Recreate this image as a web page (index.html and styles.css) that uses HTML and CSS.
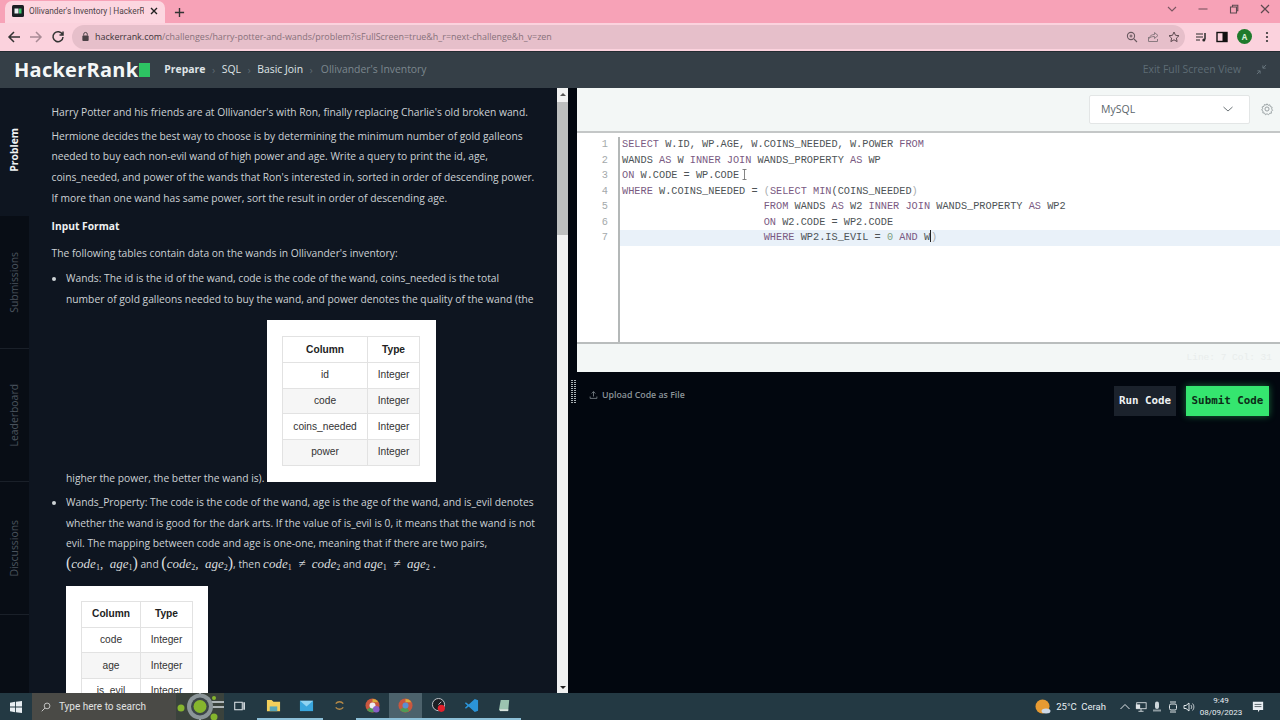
FILE: index.html
```html
<!DOCTYPE html>
<html lang="en">
<head>
<meta charset="utf-8">
<title>Ollivander's Inventory</title>
<link rel="stylesheet" href="styles.css">
</head>
<body>
<div class="tabstrip">
  <div class="tab">
    <svg class="favicon" viewBox="0 0 12 12"><rect width="12" height="12" rx="1.5" fill="#1b1f24"/><rect x="2.5" y="3.5" width="4" height="5" fill="#e9eef0"/><rect x="7" y="3.5" width="2.5" height="5" fill="#39c46a"/></svg>
    <span class="tab-title">Ollivander's Inventory | HackerRa</span>
    <svg class="tab-x" viewBox="0 0 10 10"><path d="M2 2l6 6M8 2l-6 6" stroke="#222" stroke-width="1.4"/></svg>
  </div>
  <svg class="tab-plus" viewBox="0 0 12 12"><path d="M6 1v10M1 6h10" stroke="#333" stroke-width="1.5"/></svg>
  <div class="win-controls">
    <svg viewBox="0 0 12 12"><path d="M2 4l4 4 4-4" fill="none" stroke="#7a5561" stroke-width="1.1"/></svg>
    <svg viewBox="0 0 12 12"><path d="M1.5 6h9" stroke="#7a5561" stroke-width="1.1"/></svg>
    <svg viewBox="0 0 12 12"><path d="M2.5 4h6v6h-6zM4.5 4V2.2h5.3v5.5H8.500" fill="none" stroke="#5d4a50" stroke-width="1.1"/></svg>
    <svg viewBox="0 0 12 12"><path d="M2 2l8 8M10 2l-8 8" stroke="#5d4a50" stroke-width="1.2"/></svg>
  </div>
</div>
<div class="toolbar">
  <svg class="nav" viewBox="0 0 14 14"><path d="M13 7H2M7 2L2 7l5 5" fill="none" stroke="#333" stroke-width="1.5"/></svg>
  <svg class="nav" viewBox="0 0 14 14"><path d="M1 7h11M7 2l5 5-5 5" fill="none" stroke="#a98b95" stroke-width="1.5"/></svg>
  <svg class="nav" viewBox="0 0 14 14"><path d="M11.500 4.500A5 5 0 1 0 12 7M12 1.500v3.500H8.500" fill="none" stroke="#333" stroke-width="1.5"/></svg>
  <div class="address">
    <svg class="lock" viewBox="0 0 10 12"><rect x="1.500" y="5" width="7" height="6" rx="1" fill="#4b4146"/><path d="M3 5V3.500a2 2 0 0 1 4 0V5" fill="none" stroke="#4b4146" stroke-width="1.1"/></svg>
    <span class="url"><b>hackerrank.com</b>/challenges/harry-potter-and-wands/problem?isFullScreen=true&amp;h_r=next-challenge&amp;h_v=zen</span>
    <div class="addr-icons">
      <svg viewBox="0 0 12 12"><circle cx="5" cy="5" r="3.600" fill="none" stroke="#6a5a60" stroke-width="1.100"/><path d="M8 8l3 3M3.500 5h3M5 3.500v3" stroke="#6a5a60" stroke-width="1.100"/></svg>
      <svg viewBox="0 0 12 12"><path d="M1.500 6v4.500h9V8M1.800 7.500C3 4.500 5 3.500 7.500 3.500V1.500L11 4.500 7.500 7.500V5.500C5 5.500 3.300 6 1.800 7.500z" fill="none" stroke="#8a7a80" stroke-width="1"/></svg>
      <svg viewBox="0 0 12 12"><path d="M6 1l1.500 3.300 3.500.4-2.600 2.400.7 3.500L6 8.800 2.900 10.600l.7-3.500L1 4.700l3.500-.4z" fill="none" stroke="#5d4a50" stroke-width="1"/></svg>
    </div>
  </div>
  <div class="ext-icons">
    <svg viewBox="0 0 12 12"><path d="M1 3h7M1 6h7M1 9h4" stroke="#2a2a2a" stroke-width="1.200"/><path d="M10 2v6.500" stroke="#2a2a2a" stroke-width="1.500"/><circle cx="8.800" cy="9" r="1.500" fill="#2a2a2a"/></svg>
    <svg viewBox="0 0 12 12"><rect x="1" y="1.500" width="10" height="9" fill="none" stroke="#111" stroke-width="1.400"/><rect x="6.500" y="1.500" width="4.500" height="9" fill="#111"/></svg>
    <span class="avatar">A</span>
    <svg viewBox="0 0 12 12"><circle cx="6" cy="2" r="1.100" fill="#333"/><circle cx="6" cy="6" r="1.100" fill="#333"/><circle cx="6" cy="10" r="1.100" fill="#333"/></svg>
  </div>
</div>
<header class="site-header">
  <div class="logo">HackerRank<span class="logo-block"></span></div>
  <nav class="crumbs">
    <span class="crumb-strong">Prepare</span><span class="sep">›</span>
    <span>SQL</span><span class="sep">›</span>
    <span>Basic Join</span><span class="sep">›</span>
    <span class="crumb-dim">Ollivander's Inventory</span>
  </nav>
  <div class="exit">Exit Full Screen View
    <svg viewBox="0 0 12 12"><path d="M11 1L7.500 4.500M7.500 1.500v3h3M1 11l3.500-3.500M1.500 7.500h3v3" fill="none" stroke="#6a7780" stroke-width="1"/></svg>
  </div>
</header>
<main class="workspace">
  <aside class="rail">
    <div class="rail-item active"><span>Problem</span></div>
    <div class="rail-item"><span>Submissions</span></div>
    <div class="rail-item"><span>Leaderboard</span></div>
    <div class="rail-item"><span>Discussions</span></div>
  </aside>
  <section class="problem">
    <p>Harry Potter and his friends are at Ollivander's with Ron, finally replacing Charlie's old broken wand.</p>
    <p>Hermione decides the best way to choose is by determining the minimum number of gold galleons needed to buy each non-evil wand of high power and age. Write a query to print the id, age, coins_needed, and power of the wands that Ron's interested in, sorted in order of descending power. If more than one wand has same power, sort the result in order of descending age.</p>
    <h4>Input Format</h4>
    <p class="lead">The following tables contain data on the wands in Ollivander's inventory:</p>
    <ul>
      <li>Wands: The id is the id of the wand, code is the code of the wand, coins_needed is the total number of gold galleons needed to buy the wand, and power denotes the quality of the wand (the
        higher the power, the better the wand is).
        <span class="figure fig-a">
          <table>
            <tr><th>Column</th><th>Type</th></tr>
            <tr><td>id</td><td>Integer</td></tr>
            <tr><td>code</td><td>Integer</td></tr>
            <tr><td>coins_needed</td><td>Integer</td></tr>
            <tr><td>power</td><td>Integer</td></tr>
          </table>
        </span></li>
      <li>Wands_Property: The code is the code of the wand, age is the age of the wand, and is_evil denotes whether the wand is good for the dark arts. If the value of is_evil is 0, it means that the wand is not evil. The mapping between code and age is one-one, meaning that if there are two pairs,<br>
        <span class="math"><span class="paren">(</span>code<sub>1</sub>, &nbsp;age<sub>1</sub><span class="paren">)</span></span> and <span class="math"><span class="paren">(</span>code<sub>2</sub>, &nbsp;age<sub>2</sub><span class="paren">)</span></span>, then <span class="math">code<sub>1</sub> &nbsp;≠ &nbsp;code<sub>2</sub></span> and <span class="math">age<sub>1</sub> &nbsp;≠ &nbsp;age<sub>2</sub> .</span>
        <span class="figure fig-b">
          <table>
            <tr><th>Column</th><th>Type</th></tr>
            <tr><td>code</td><td>Integer</td></tr>
            <tr><td>age</td><td>Integer</td></tr>
            <tr><td>is_evil</td><td>Integer</td></tr>
          </table>
        </span>
      </li>
    </ul>
  </section>
  <div class="scrollbar">
    <span class="arrow up"></span>
    <span class="thumb"></span>
    <span class="arrow down"></span>
  </div>
  <div class="gutter"><span class="grip"></span></div>
  <section class="right">
    <div class="editor">
      <div class="editor-top">
        <div class="lang">MySQL
          <svg viewBox="0 0 12 12"><path d="M1.500 4l4.500 4 4.500-4" fill="none" stroke="#6c7478" stroke-width="1"/></svg>
        </div>
        <svg class="gear" viewBox="0 0 24 24"><circle cx="12" cy="12" r="3.500" fill="none" stroke="#8b9497" stroke-width="1.500"/><path d="M12 2l2 3 3.500-1 .8 3.500 3.500 1-1 3.500 2 2.500-2.800 2 .5 3.500-3.500.2L15 23l-3-2-3 2-1.500-3.300-3.500-.2.500-3.500-2.800-2 2-2.500-1-3.500 3.500-1 .8-3.500 3.500 1z" transform="translate(1.200 1.200) scale(.9)" fill="none" stroke="#8b9497" stroke-width="1.500"/></svg>
      </div>
      <div class="code">
        <div class="line"><span class="num">1</span><span class="src"><i>SELECT</i> W.ID, WP.AGE, W.COINS_NEEDED, W.POWER <i>FROM</i></span></div>
        <div class="line"><span class="num">2</span><span class="src">WANDS <i>AS</i> W <i>INNER JOIN</i> WANDS_PROPERTY <i>AS</i> WP</span></div>
        <div class="line"><span class="num">3</span><span class="src"><i>ON</i> W.CODE = WP.CODE<svg class="ibeam" viewBox="0 0 5 11"><path d="M.5.500h4M2.500.500v10M.5 10.500h4" fill="none" stroke="#666" stroke-width=".8"/></svg></span></div>
        <div class="line"><span class="num">4</span><span class="src"><i>WHERE</i> W.COINS_NEEDED = <span class="dimparen">(</span><i>SELECT</i> <i>MIN</i>(COINS_NEEDED<span class="dimparen">)</span></span></div>
        <div class="line"><span class="num">5</span><span class="src">                       <i>FROM</i> WANDS <i>AS</i> W2 <i>INNER JOIN</i> WANDS_PROPERTY <i>AS</i> WP2</span></div>
        <div class="line"><span class="num">6</span><span class="src">                       <i>ON</i> W2.CODE = WP2.CODE</span></div>
        <div class="line current"><span class="num">7</span><span class="src">                       <i>WHERE</i> WP2.IS_EVIL = <u>0</u> <i>AND</i> W<s></s><span class="dimparen">)</span></span></div>
        <div class="code-fill"><span class="num"></span><span class="src"></span></div>
      </div>
      <div class="status">Line: 7 Col: 31</div>
    </div>
    <div class="actions">
      <div class="upload">
        <svg viewBox="0 0 12 12"><path d="M6 8V1.500M3.500 4L6 1.500 8.500 4M1.500 8v2.500h9V8" fill="none" stroke="#8b9499" stroke-width="1"/></svg>
        Upload Code as File
      </div>
      <div class="btn run">Run Code</div>
      <div class="btn submit">Submit Code</div>
    </div>
  </section>
</main>
<footer class="taskbar">
  <svg class="start" viewBox="0 0 14 14"><path d="M0 2l6-1v5.500H0zM7 1l7-1v6.500H7zM0 7.500h6V13l-6-1zM7 7.500h7V14l-7-1z" fill="#e8eef2"/></svg>
  <div class="search">
    <svg viewBox="0 0 14 14"><circle cx="8.500" cy="5.500" r="4" fill="none" stroke="#e0e0e0" stroke-width="1.100"/><path d="M5.500 8.500L1 13" stroke="#e0e0e0" stroke-width="1.200"/></svg>
    <span>Type here to search</span>
    <svg class="search-art" viewBox="0 0 48 27"><path d="M0 0h48v27H0z" fill="#3a423c"/><path d="M24 0v27M32 9h16M32 14h16" stroke="#aeb5b7" stroke-width="2"/><circle cx="24" cy="13.500" r="13" fill="#8b9598"/><circle cx="24" cy="13.500" r="9" fill="#3c4548"/><circle cx="24" cy="13.500" r="6.500" fill="#86b52d"/><circle cx="5" cy="15" r="3.500" fill="#86b52d"/><circle cx="38" cy="24" r="3.500" fill="#86b52d"/><circle cx="38" cy="5" r="2" fill="#86b52d"/></svg>
  </div>
  <div class="task-apps">
    <div class="app plain"><svg viewBox="0 0 16 16"><rect x="1" y="3" width="10" height="10" fill="none" stroke="#e8eef2" stroke-width="1.300"/><path d="M13.500 3v10" stroke="#e8eef2" stroke-width="2"/></svg></div>
    <div class="app on"><svg viewBox="0 0 16 16"><path d="M1 2h5l2 2h7v10H1z" fill="#f3cf5b"/><rect x="4" y="9" width="8" height="5" fill="#5aa7b8"/></svg></div>
    <div class="app on"><svg viewBox="0 0 16 16"><rect x="1" y="3" width="14" height="11" fill="#3aa6dd"/><path d="M1 3l7 6 7-6" fill="#8fd3f2"/></svg></div>
    <div class="app"><svg viewBox="0 0 16 16"><path d="M4 6a5 5 0 0 1 8 0M4 10a5 5 0 0 0 8 0" fill="none" stroke="#b78a47" stroke-width="1.500"/></svg></div>
    <div class="app on"><svg viewBox="0 0 16 16"><circle cx="8" cy="8" r="7.500" fill="#c9573f"/><path d="M8 1a7 7 0 0 1 6 3.500H8z" fill="#d9b13b"/><path d="M2 12.500a7 7 0 0 0 10 1L8 8z" fill="#4f9a55"/><circle cx="8" cy="8" r="3.200" fill="#f0eef2"/><circle cx="12" cy="12" r="3.500" fill="#8a5fc7"/></svg></div>
    <div class="app on active"><svg viewBox="0 0 16 16"><circle cx="8" cy="8" r="7.500" fill="#c9573f"/><path d="M8 1a7 7 0 0 1 6 3.500H8z" fill="#d9b13b"/><path d="M2 12.500a7 7 0 0 0 10 1L8 8z" fill="#4f9a55"/><circle cx="8" cy="8" r="3.200" fill="#5b8fd0"/></svg></div>
    <div class="app on"><svg viewBox="0 0 16 16"><circle cx="8" cy="7" r="6.500" fill="#1b1f24" stroke="#c8ccd0"/><path d="M8 7l3-3" stroke="#c8ccd0"/><circle cx="11" cy="11" r="3.800" fill="#e3202b"/></svg></div>
    <div class="app on"><svg viewBox="0 0 16 16"><path d="M11.500 1L15 2.500v11L11.500 15 5 9l-3 2.500L1 10.500 3.500 8 1 5.500 2 4.500 5 7z" fill="#2b94d8"/></svg></div>
    <div class="app on"><svg viewBox="0 0 16 16"><path d="M4 2h9l-1 11H2z" fill="#9cc4b0"/><path d="M3 12h9v2H3z" fill="#d7e2dc"/></svg></div>
  </div>
  <div class="tray">
    <svg class="sun" viewBox="0 0 16 16"><circle cx="7.500" cy="7.500" r="7" fill="#e69a32"/><ellipse cx="11" cy="12" rx="4.500" ry="2.500" fill="#cdd8e6"/></svg>
    <span class="weather">25°C &nbsp;Cerah</span>
    <svg class="tray-i" viewBox="0 0 12 12"><path d="M1.500 8L6 3.500 10.500 8" fill="none" stroke="#dfe5e8" stroke-width="1"/></svg>
    <svg class="tray-i" viewBox="0 0 14 12"><rect x="2" y="1" width="11" height="7" fill="none" stroke="#dfe5e8"/><rect x="1" y="3" width="5" height="5" fill="#dfe5e8"/><path d="M4 11h6M7 8v3" stroke="#dfe5e8"/></svg>
    <svg class="tray-i" viewBox="0 0 12 12"><rect x="4" y="0.500" width="4" height="7.500" rx="2" fill="#cdd6da"/><path d="M2 8.500h8v2H2z" fill="#8d9aa0"/></svg>
    <svg class="tray-i" viewBox="0 0 12 12"><rect x="2.500" y="3" width="7" height="6" rx="1.500" fill="none" stroke="#dfe5e8"/><path d="M3 1h6M3 11h6" stroke="#dfe5e8"/></svg>
    <svg class="tray-i" viewBox="0 0 12 12"><path d="M1 4.500h2L6 2v8L3 7.500H1z" fill="none" stroke="#dfe5e8"/><path d="M8 4a3 3 0 0 1 0 4M9.500 2.500a5 5 0 0 1 0 7" fill="none" stroke="#dfe5e8" stroke-width=".8"/></svg>
    <div class="clock"><span>9:49</span><span>08/09/2023</span></div>
    <svg class="notif" viewBox="0 0 14 14"><path d="M1 1h12v9.500H9L7 13v-2.500H1z" fill="#e8eef2"/><path d="M3 4h8M3 6.500h8" stroke="#49555b"/></svg>
  </div>
</footer>
</body>
</html>
```

FILE: styles.css
```css
* { box-sizing: border-box; }
html, body { margin: 0; height: 100%; }
body {
  width: 1280px;
  height: 720px;
  overflow: hidden;
  display: flex;
  flex-direction: column;
  font-family: "Open Sans", "Liberation Sans", sans-serif;
  background: #0e1520;
}
svg { display: block; flex: none; }

/* Browser chrome */
.tabstrip {
  height: 23px;
  flex: none;
  display: flex;
  align-items: flex-end;
  background: #f7a2b7;
  padding-left: 5px;
}
.tab {
  width: 160px;
  height: 22px;
  background: #fcd6e0;
  border-radius: 7px 7px 0 0;
  display: flex;
  align-items: center;
  padding: 0 6px 2px 7px;
  gap: 5px;
}
.favicon { width: 12px; height: 12px; }
.tab-title {
  font-family: Roboto, sans-serif;
  font-size: 8.300px;
  color: #4d4347;
  white-space: nowrap;
  overflow: hidden;
  flex: 1;
  min-width: 0;
}
.tab-x { width: 10px; height: 10px; }
.tab-plus { width: 11px; height: 11px; margin: 0 0 5px 9px; }
.win-controls {
  margin-left: auto;
  align-self: flex-start;
  display: flex;
  gap: 19px;
  padding: 3px 9px 0 0;
}
.win-controls svg { width: 12px; height: 12px; }

.toolbar {
  height: 28px;
  flex: none;
  background: #fbd2dd;
  display: flex;
  align-items: center;
  padding: 0 0 1px 7px;
}
.nav { width: 14px; height: 14px; margin-right: 8px; }
.nav:nth-child(3) { margin-right: 7px; }
.address {
  width: 1113px;
  height: 24px;
  background: #e6bfca;
  border-radius: 12px;
  display: flex;
  align-items: center;
  padding: 0 5px 0 9px;
}
.lock { width: 9px; height: 11px; margin: 0 5px 0 0; }
.url {
  font-size: 8.930px;
  color: #86717a;
  white-space: nowrap;
  font-family: "Open Sans", sans-serif;
}
.url b { font-weight: 400; color: #3c3338; }
.addr-icons { margin-left: auto; display: flex; gap: 9px; }
.addr-icons svg { width: 12px; height: 12px; }
.ext-icons {
  display: flex;
  align-items: center;
  margin-left: 10px;
  gap: 9px;
}
.ext-icons svg { width: 12px; height: 12px; }
.avatar {
  width: 15px;
  height: 15px;
  border-radius: 50%;
  background: #1f7a2c;
  color: #d7eed9;
  font-size: 8px;
  font-weight: 700;
  display: flex;
  align-items: center;
  justify-content: center;
}

/* Site header */
.site-header {
  height: 37px;
  flex: none;
  background: #353f47;
  border-top: 1px solid #232b31;
  display: flex;
  align-items: center;
  padding: 0 13px 2px 14px;
}
.logo {
  font-family: "Open Sans", sans-serif;
  font-weight: 700;
  font-size: 20px;
  color: #f4f7f7;
  display: flex;
  align-items: center;
  letter-spacing: 0.25px;
}
.logo-block {
  width: 11px;
  height: 14px;
  background: #2dc463;
  margin: 2px 0 0 1px;
}
.crumbs {
  margin-left: 14px;
  display: flex;
  align-items: center;
  font-size: 10.400px;
  color: #dfe4e6;
}
.crumb-strong { font-weight: 700; }
.sep { color: #5c6870; margin: 0 6.500px; font-size: 11px; }
.crumb-dim { color: #7c878e; margin-left: 1.500px; }
.exit {
  margin-left: auto;
  display: flex;
  align-items: center;
  gap: 15px;
  font-size: 10.400px;
  color: #5e6c75;
}
.exit svg { width: 11px; height: 11px; }

/* Workspace */
.workspace {
  flex: 1;
  min-height: 0;
  display: flex;
  background: #0e1520;
}
.rail {
  width: 29px;
  flex: none;
  background: #080d15;
  display: flex;
  flex-direction: column;
}
.rail-item {
  height: 133px;
  display: flex;
  align-items: center;
  justify-content: center;
  padding-right: 1px;
  border-bottom: 1px solid #1a2029;
}
.rail-item:first-child { height: 128px; border-bottom: 0; }
.rail-item.active { background: #0e1520; }
.rail-item span {
  writing-mode: vertical-rl;
  transform: rotate(180deg);
  font-size: 10.400px;
  color: #4a535d;
  white-space: nowrap;
}
.rail-item:first-child span { margin-bottom: 4px; }
.rail-item.active span { color: #f0f3f4; font-weight: 700; }

.problem {
  width: 528px;
  flex: none;
  overflow: hidden;
  padding: 14px 20px 0 22.500px;
  font-size: 10.270px;
  line-height: 20.700px;
  color: #cdd2d5;
}
.problem p { margin: 0 0 3px; }
.problem h4 {
  margin: 7px 0 7px;
  font-size: 10.270px;
  font-weight: 700;
  color: #eef1f2;
}
.problem .lead { margin-bottom: 4px; }
.problem ul { margin: 0; padding-left: 14.500px; }
.problem li { margin-bottom: 3px; }
.problem li::marker { color: #cdd2d5; }
.figure {
  display: inline-block;
  background: #fff;
  padding: 15px;
  vertical-align: baseline;
}
.fig-a { width: 169px; height: 162px; margin: 11px 0 0; padding-top: 16px; }
.fig-b { display: block; width: 142px; height: 180px; margin-top: 11px; overflow: hidden; }
.figure table {
  border-collapse: collapse;
  font-family: "Liberation Sans", Arial, sans-serif;
  font-size: 10.200px;
  line-height: 14px;
  color: #333;
}
.figure td, .figure th {
  border: 1px solid #e2e2e2;
  text-align: center;
  height: 25.700px;
  padding: 0;
}
.fig-a td:first-child, .fig-a th:first-child { width: 85px; }
.fig-a td:last-child, .fig-a th:last-child { width: 52px; }
.fig-b td:first-child, .fig-b th:first-child { width: 59px; }
.fig-b td:last-child, .fig-b th:last-child { width: 52px; }
.figure th { font-weight: 700; color: #222; }
.figure tr:nth-child(odd) td { background: #f6f6f6; }
.math {
  font-family: "Liberation Serif", serif;
  font-style: italic;
  font-size: 13px;
  color: #d8dcde;
}
.math sub { font-size: 8px; font-style: normal; vertical-align: -2px; line-height: 0; }
.paren { font-style: normal; font-size: 16px; line-height: 0; }

.scrollbar {
  width: 11px;
  flex: none;
  background: #f0f1f1;
  display: flex;
  flex-direction: column;
  align-items: center;
}
.thumb {
  width: 100%;
  height: 133px;
  background: #bdbfbf;
  margin-top: 3px;
  flex: none;
}
.arrow { width: 0; height: 0; border: 3.500px solid transparent; flex: none; }
.arrow.up { border-bottom-color: #555; margin-top: 2px; margin-bottom: 3px; }
.arrow.down { border-top-color: #222; margin-top: auto; margin-bottom: 1px; }

.gutter {
  width: 9px;
  flex: none;
  background: #02070f;
  position: relative;
}
.grip {
  position: absolute;
  left: 3px;
  top: 292px;
  width: 5px;
  height: 23px;
  background:
    linear-gradient(90deg, transparent 2px, #02070f 2px 3px, transparent 3px),
    repeating-linear-gradient(#a8b0b4 0 1px, #02070f 1px 2px);
}

.right {
  flex: 1;
  min-width: 0;
  background: #02070f;
  display: flex;
  flex-direction: column;
}
.editor {
  height: 284px;
  flex: none;
  background: #f3f7f6;
  display: flex;
  flex-direction: column;
}
.editor-top {
  height: 45px;
  flex: none;
  display: flex;
  align-items: flex-start;
  justify-content: flex-end;
  padding: 7px 6px 0 0;
  gap: 10px;
  border-bottom: 2px solid #c4c7c7;
}
.lang {
  width: 161px;
  height: 29px;
  background: #fff;
  border: 1px solid #e3e6e6;
  border-radius: 2px;
  font-size: 10.500px;
  color: #5b666c;
  display: flex;
  align-items: center;
  justify-content: space-between;
  padding: 0 15px 1px 11px;
}
.lang svg { width: 12px; height: 12px; }
.gear { width: 14px; height: 14px; margin-top: 7px; }
.code {
  height: 211px;
  flex: none;
  background: #fff;
  border-bottom: 2px solid #b9bdbd;
  padding-top: 4px;
  display: flex;
  flex-direction: column;
  font-family: "Liberation Mono", "DejaVu Sans Mono", monospace;
  font-size: 10.270px;
  line-height: 15.500px;
  color: #4d5356;
}
.line { display: flex; height: 15.500px; flex: none; }
.num {
  width: 41px;
  flex: none;
  text-align: right;
  padding-right: 10px;
  color: #a4a9ab;
  background: #fff;
}
.src {
  flex: 1;
  white-space: pre;
  border-left: 2px solid #b4b8b8;
  padding-left: 2px;
}
.src i { font-style: normal; color: #7a5a82; }
.src u { text-decoration: none; color: #7fa07f; }
.src s {
  display: inline-block;
  width: 1px;
  height: 12px;
  background: #222;
  vertical-align: -2px;
}
.dimparen { color: #a9aeb0; }
.ibeam { display: inline-block; width: 5px; height: 11px; margin-left: 3px; vertical-align: -2px; }
.current .src { background: #e9f1f9; }
.code-fill { flex: 1; display: flex; }
.status {
  flex: 1;
  text-align: right;
  font-family: "Liberation Mono", monospace;
  font-size: 9.500px;
  color: #e9edec;
  padding: 8px 8px 0 0;
  line-height: 12px;
}
.actions {
  display: flex;
  align-items: flex-start;
  padding: 14px 11px 0 12px;
}
.upload {
  display: flex;
  align-items: center;
  gap: 4px;
  font-size: 8.800px;
  font-weight: 600;
  color: #8b9499;
  margin-top: 1px;
  height: 16px;
}
.upload svg { width: 9px; height: 10px; }
.btn {
  height: 30px;
  display: flex;
  align-items: center;
  justify-content: center;
  font-family: "DejaVu Sans Mono", monospace;
  font-size: 10.850px;
  font-weight: 700;
  padding-bottom: 2px;
}
.run {
  width: 62px;
  margin-left: auto;
  background: #1b222c;
  color: #eef1f2;
}
.submit {
  width: 83px;
  margin-left: 10px;
  background: #35e56f;
  color: #0c2b17;
  box-shadow: 0 0 7px rgba(53, 229, 111, 0.45);
}

/* Taskbar */
.taskbar {
  height: 27px;
  flex: none;
  background: #233943;
  display: flex;
  align-items: center;
  color: #e8eef2;
  font-family: Roboto, sans-serif;
}
.start { width: 12px; height: 12px; margin: 0 10px; }
.search {
  width: 191.500px;
  height: 27px;
  background: #4a4a46;
  display: flex;
  align-items: center;
  padding-left: 9px;
  font-size: 10px;
  color: #e0e2e2;
}
.search > svg:first-child { width: 10px; height: 10px; margin-right: 8px; }
.search-art { width: 48px; height: 27px; margin-left: auto; }
.task-apps { display: flex; }
.app {
  width: 33px;
  height: 27px;
  display: flex;
  align-items: center;
  justify-content: center;
  border-bottom: 2px solid transparent;
}
.app svg { width: 15px; height: 15px; }
.app.plain svg { width: 12px; height: 12px; }
.app.on { border-bottom-color: #8dc0d8; }
.app.active { background: #4c626c; }
.tray {
  margin-left: auto;
  display: flex;
  align-items: center;
  padding-right: 16px;
}
.sun { width: 16px; height: 16px; margin-right: 5px; }
.weather { font-size: 9.500px; margin-right: 13px; white-space: nowrap; }
.tray-i { width: 12px; height: 12px; margin-right: 4px; }
.clock {
  display: flex;
  flex-direction: column;
  align-items: center;
  width: 38px;
  white-space: nowrap;
  font-size: 8px;
  line-height: 12px;
  margin: 0 12px 0 3px;
}
.notif { width: 12px; height: 12px; }
```
